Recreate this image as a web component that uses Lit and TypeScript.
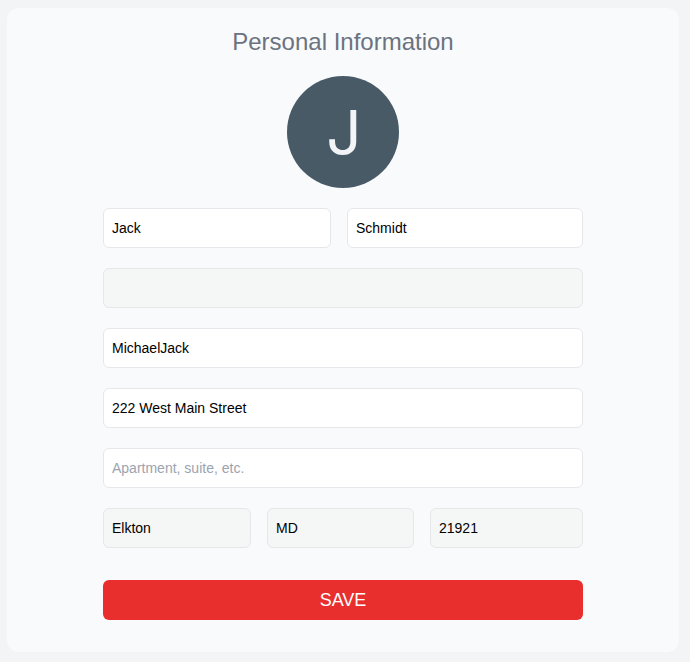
import { LitElement, html, css } from "lit";
import { customElement } from "lit/decorators.js";

@customElement("app-root")
export class AppRoot extends LitElement {
  static styles = css`
    :host {
      display: block;
      background: #f3f4f6;
      font-family: "Liberation Sans", Arial, sans-serif;
      padding: 8px 11px 10px 7px;
      box-sizing: border-box;
      min-height: 662px;
    }
    .card {
      background: #f9fafb;
      border-radius: 12px;
      height: 644px;
      box-sizing: border-box;
      padding-top: 16px;
      display: flex;
      flex-direction: column;
      align-items: center;
    }
    h1 {
      margin: 0;
      font-size: 24px;
      line-height: 36px;
      font-weight: 400;
      color: #6b7280;
    }
    .avatar {
      width: 112px;
      height: 112px;
      box-sizing: border-box;
      padding: 2px 0 0 2px;
      border-radius: 50%;
      background: #475a66;
      color: #f3f4f6;
      margin-top: 16px;
      display: flex;
      align-items: center;
      justify-content: center;
      font-size: 62px;
      line-height: 1;
      font-family: Inter, sans-serif;
      font-weight: 400;
    }
    form {
      width: 480px;
      margin: 20px 0 0 0;
      display: flex;
      flex-direction: column;
      gap: 20px;
    }
    .row {
      display: grid;
      gap: 16px;
    }
    .names {
      grid-template-columns: 228px 236px;
    }
    .city {
      grid-template-columns: 148px 147px 153px;
    }
    input {
      display: block;
      width: 100%;
      height: 40px;
      box-sizing: border-box;
      border: 1px solid #e5e7eb;
      border-radius: 6px;
      background: #fff;
      padding: 0 8px;
      font: 14px "Liberation Sans", Arial, sans-serif;
      color: #000;
      outline: none;
    }
    input::placeholder {
      color: #9ca3af;
      opacity: 1;
    }
    input.locked {
      background: #f5f6f6;
    }
    button {
      display: block;
      width: 100%;
      height: 40px;
      margin-top: 12px;
      border: 0;
      border-radius: 6px;
      background: #e92e2e;
      color: #fff;
      font: 18px "Liberation Sans", Arial, sans-serif;
      padding: 0;
    }
  `;

  render() {
    return html`
      <div class="card">
        <h1>Personal Information</h1>
        <div class="avatar">J</div>
        <form>
          <div class="row names">
            <input value="Jack" />
            <input value="Schmidt" />
          </div>
          <input class="locked" readonly />
          <input value="MichaelJack" />
          <input value="222 West Main Street" />
          <input placeholder="Apartment, suite, etc." />
          <div class="row city">
            <input class="locked" readonly value="Elkton" />
            <input class="locked" readonly value="MD" />
            <input class="locked" readonly value="21921" />
          </div>
          <button type="button">SAVE</button>
        </form>
      </div>
    `;
  }
}
